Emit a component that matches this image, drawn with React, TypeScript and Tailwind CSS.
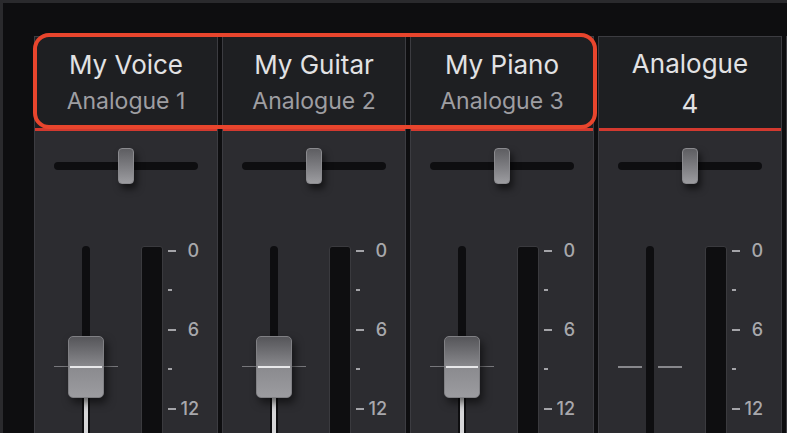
import React from "react";

type Channel = { name: string; sub?: string; level: number | null; blank?: boolean };

const channels: Channel[] = [
  { name: "My Voice", sub: "Analogue 1", level: 90 },
  { name: "My Guitar", sub: "Analogue 2", level: 90 },
  { name: "My Piano", sub: "Analogue 3", level: 90 },
  { name: "Analogue 4", level: null },
  { name: "Analogue 5", level: null, blank: true },
];

const scale = [
  { label: "0", major: true },
  { label: "", major: false },
  { label: "6", major: true },
  { label: "", major: false },
  { label: "12", major: true },
  { label: "", major: false },
];

function Pan() {
  return (
    <div className="relative mx-auto mt-[17px] flex h-[36px] w-[144px] shrink-0 items-center">
      <div className="h-[8px] w-full rounded-full bg-[#0e0e10]" />
      <div className="absolute left-[64px] top-0 h-[36px] w-[16px] rounded-[4px] border border-[#8a8a8e] bg-gradient-to-b from-[#5e5e62] to-[#9c9ca0] shadow-[3px_5px_7px_rgba(0,0,0,0.55)]" />
    </div>
  );
}

function Fader({ level }: { level: number | null }) {
  return (
    <div className="relative ml-[19px] flex h-[220px] w-[64px] justify-center">
      <div className="h-full w-[8px] rounded-t-full bg-[#0e0e10]" />
      {level !== null ? (
        <>
          <div className="absolute bottom-0 left-[30px] top-[150px] w-[4px] bg-[#d6d6d8]" />
          <div className="absolute left-0 right-0 top-[120px] h-[1px] bg-[#77777b]" />
          <div
            className="absolute left-[14px] h-[62px] w-[36px] rounded-[5px] border border-[#808084] bg-gradient-to-b from-[#56565a] via-[#8a8a8e] via-50% to-[#9c9ca0] shadow-[3px_5px_8px_rgba(0,0,0,0.55)]"
            style={{ top: level }}
          >
            <div className="mx-[1px] mt-[29px] h-[2px] bg-[#e8e8ea]" />
          </div>
        </>
      ) : (
        <div className="absolute left-0 right-0 top-[120px] flex justify-between">
          <div className="h-[2px] w-[24px] bg-[#88888c]" />
          <div className="h-[2px] w-[24px] bg-[#88888c]" />
        </div>
      )}
    </div>
  );
}

function Meter() {
  return <div className="ml-[23px] h-[220px] w-[22px] rounded-t-[3px] border border-[#3a3a3e] bg-[#0e0e10]" />;
}

function Scale() {
  return (
    <div className="-mt-[15px] ml-[5px] flex w-[31px] flex-col">
      {scale.map((s, i) => (
        <div key={i} className="flex h-[39.5px] items-center">
          <div className={`h-[2px] bg-[#a4a4a8] ${s.major ? "w-[8px]" : "w-[4px]"}`} />
          <div className="flex-1 text-right text-[18px] font-medium leading-none text-[#a8a8ac]">{s.label}</div>
        </div>
      ))}
    </div>
  );
}

function Strip({ ch }: { ch: Channel }) {
  return (
    <div className="flex w-[184px] shrink-0 flex-col border border-[#3c3c41] bg-[#2c2c30]">
      <div className="flex h-[91px] shrink-0 flex-col items-center justify-center bg-[#1e1f22] text-center">
        {ch.blank ? null : ch.sub ? (
          <>
            <div className="text-[26px] leading-[30px] text-[#e2e2e4]">{ch.name}</div>
            <div className="mt-[6px] text-[23px] leading-[30px] text-[#9e9ea2]">{ch.sub}</div>
          </>
        ) : (
          <div className="mt-[3px] w-[130px] text-[26px] leading-[40px] text-[#e2e2e4]">{ch.name}</div>
        )}
      </div>
      <div className="h-[3px] shrink-0 bg-[#d3392f]" />
      <Pan />
      <div className="mt-[62px] flex shrink-0 items-start">
        <Fader level={ch.level} />
        <Meter />
        {ch.blank ? null : <Scale />}
      </div>
    </div>
  );
}

export default function App() {
  return (
    <div
      className="h-[433px] w-[787px] overflow-hidden border-l-[3px] border-t-[3px] border-[#2a2a2d] bg-[#0e0e10] pl-[31px] pt-[33px]"
      style={{ fontFamily: "Inter, 'Noto Sans', sans-serif" }}
    >
      <div className="relative flex gap-[4px]">
        {channels.map((ch) => (
          <Strip key={ch.name} ch={ch} />
        ))}
        <div className="pointer-events-none absolute -left-[1px] -top-[3px] h-[96px] w-[564px] rounded-[16px] border-[4px] border-[#e8452d]" />
      </div>
    </div>
  );
}
